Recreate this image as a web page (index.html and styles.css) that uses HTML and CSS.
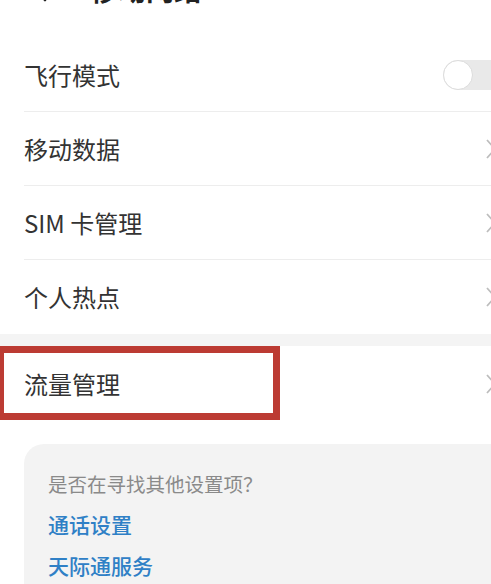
FILE: index.html
```html
<!DOCTYPE html>
<html lang="zh">
<head>
<meta charset="utf-8">
<link rel="stylesheet" href="styles.css">
</head>
<body>
<div class="screen">
  <header class="topbar">
    <svg class="back" width="16" height="26" viewBox="0 0 16 26"><path d="M13 2 L3 13 L13 24" fill="none" stroke="#222" stroke-width="2.6" stroke-linecap="round" stroke-linejoin="round"/></svg>
    <span class="title">移动网络</span>
  </header>
  <section class="list">
    <div class="row"><span class="label">飞行模式</span><span class="toggle"><span class="knob"></span></span></div>
    <div class="row"><span class="label">移动数据</span><svg class="chev" width="12" height="22" viewBox="0 0 12 22"><path d="M2 2 L10 11 L2 20" fill="none" stroke="#bdbdbd" stroke-width="1.8"/></svg></div>
    <div class="row"><span class="label">SIM 卡管理</span><svg class="chev" width="12" height="22" viewBox="0 0 12 22"><path d="M2 2 L10 11 L2 20" fill="none" stroke="#bdbdbd" stroke-width="1.8"/></svg></div>
    <div class="row last"><span class="label">个人热点</span><svg class="chev" width="12" height="22" viewBox="0 0 12 22"><path d="M2 2 L10 11 L2 20" fill="none" stroke="#bdbdbd" stroke-width="1.8"/></svg></div>
  </section>
  <div class="gap"></div>
  <section class="list">
    <div class="row single"><span class="label">流量管理</span><svg class="chev" width="12" height="22" viewBox="0 0 12 22"><path d="M2 2 L10 11 L2 20" fill="none" stroke="#bdbdbd" stroke-width="1.8"/></svg></div>
  </section>
  <div class="card">
    <p class="hint">是否在寻找其他设置项？</p>
    <p class="link">通话设置</p>
    <p class="link">天际通服务</p>
  </div>
  <div class="highlight"></div>
</div>
</body>
</html>
```

FILE: styles.css
```css
html, body {
  margin: 0;
  padding: 0;
  background: #ffffff;
  overflow: hidden;
}
body {
  font-family: "Noto Sans CJK SC", "Noto Sans", sans-serif;
  color: #333333;
}
.screen {
  position: relative;
  width: 520px;
  height: 584px;
  overflow: hidden;
}
.topbar {
  display: flex;
  align-items: center;
  height: 60px;
  margin-top: -22px;
  padding-left: 32px;
  box-sizing: border-box;
}
.back {
  margin-top: -38px;
}
.title {
  margin-left: 42px;
  margin-top: -38px;
  font-size: 28px;
  font-weight: 700;
  color: #222;
  line-height: 1;
}
.list {
  padding-left: 24px;
}
.row {
  display: flex;
  align-items: center;
  justify-content: space-between;
  height: 73px;
  border-bottom: 1px solid #ededed;
  padding-right: 23px;
}
.row.last {
  height: 74px;
  border-bottom: none;
}
.row.single {
  height: 75px;
  border-bottom: none;
}
.label {
  font-size: 24px;
  line-height: 1;
  color: #333;
}
.toggle {
  position: relative;
  width: 62px;
  height: 30px;
  border-radius: 15px;
  background: #e9e9e9;
  margin-right: -8px;
}
.knob {
  position: absolute;
  left: 0;
  top: 0;
  width: 28px;
  height: 28px;
  border-radius: 50%;
  background: #fff;
  border: 1px solid #dcdcdc;
}
.gap {
  height: 12px;
  background: #f4f4f4;
}
.card {
  margin: 23px 0 0 24px;
  background: #f3f3f3;
  border-radius: 20px 0 0 0;
  padding: 19px 0 20px 24px;
}
.card p {
  margin: 0;
  line-height: 41px;
}
.hint {
  color: #8a8a8a;
  font-size: 19.5px;
}
.link {
  color: #2f80c6;
  font-size: 21px;
  font-weight: 500;
}
.highlight {
  position: absolute;
  left: -3px;
  top: 346px;
  width: 283px;
  height: 74px;
  box-sizing: border-box;
  border: 7px solid #bc3b33;
}
```
